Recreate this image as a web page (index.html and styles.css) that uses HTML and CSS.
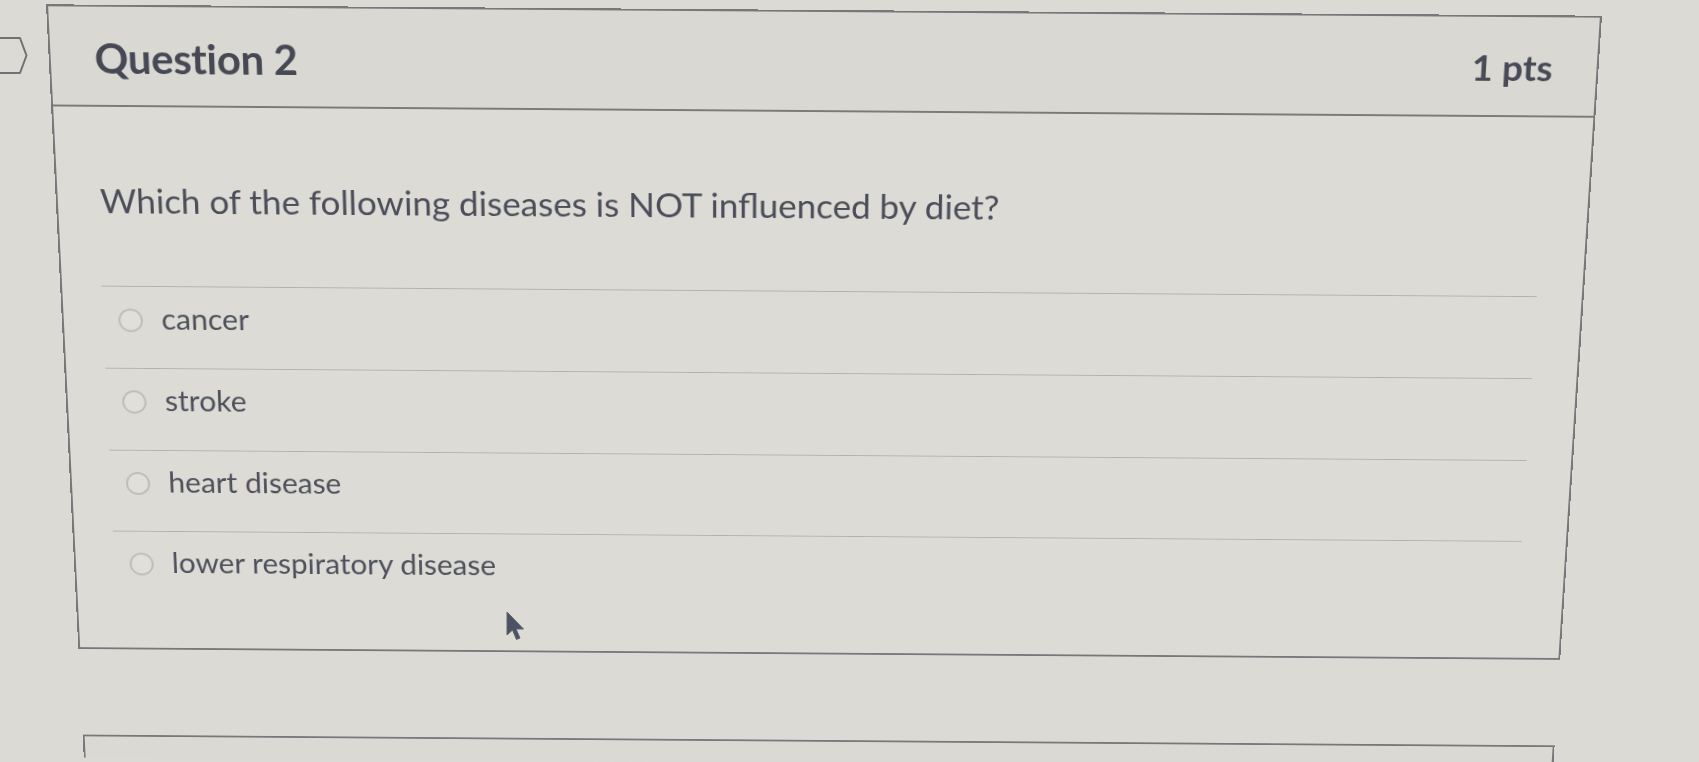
FILE: index.html
```html
<!DOCTYPE html>
<html lang="en">
<head>
<meta charset="utf-8">
<title>Question 2</title>
<link rel="stylesheet" href="styles.css">
</head>
<body>
<div class="page">
  <div class="gutter">
    <svg class="flag" width="30" height="40" viewBox="0 0 30 40">
      <path d="M-2 2 H20 L26.5 19.5 L20 37 H-2" fill="none" stroke="#707176" stroke-width="2" stroke-linejoin="round"/>
    </svg>
  </div>
  <div class="column">
    <div class="quiz">
      <div class="quiz-header">
        <h2 class="title">Question 2</h2>
        <div class="points">1 pts</div>
      </div>
      <div class="quiz-body">
        <p class="prompt">Which of the following diseases is NOT influenced by diet?</p>
        <ul class="answers">
          <li class="answer"><span class="radio"></span><span class="label">cancer</span></li>
          <li class="answer"><span class="radio"></span><span class="label">stroke</span></li>
          <li class="answer"><span class="radio"></span><span class="label">heart disease</span></li>
          <li class="answer"><span class="radio"></span><span class="label">lower respiratory disease</span></li>
        </ul>
      </div>
    </div>
    <div class="next-box"></div>
  </div>
  <svg class="cursor" width="24" height="32" viewBox="0 0 24 32">
    <path d="M2 1 L2 24 L7.5 19 L11.5 28.5 L15 27 L11 18 L18.5 18 Z" fill="#4c5262" stroke="#5d6272" stroke-width="1"/>
  </svg>
</div>
</body>
</html>
```
FILE: styles.css
```css
* { box-sizing: border-box; }
html, body { margin: 0; padding: 0; }
body {
  background: #dbdad5;
  font-family: Lato, "Open Sans", sans-serif;
  color: #4b4e59;
  width: 1699px;
  height: 762px;
  overflow: hidden;
}
.page {
  position: relative;
  display: flex;
  padding-top: 10px;
  height: 762px;
  overflow: hidden;
}
.gutter {
  width: 46px;
  flex: none;
}
.flag {
  display: block;
  margin-top: 26px;
}
.column {
  width: 1556px;
  flex: none;
  transform-origin: 778px 0;
  transform: rotate(0.42deg) perspective(2000px) rotateX(-8.41deg);
}
.quiz {
  border: 2px solid #78787a;
  background: #dcdbd6;
}
.quiz-header {
  height: 102px;
  border-bottom: 2px solid #7a7a7a;
  background: #d9d8d3;
  display: flex;
  justify-content: space-between;
  padding: 0 44px 0 44px;
}
.title {
  margin: 0;
  font-size: 42px;
  font-weight: 700;
  line-height: 1;
  padding-top: 31px;
  color: #464954;
  letter-spacing: -0.3px;
}
.points {
  font-size: 37px;
  font-weight: 700;
  line-height: 1;
  padding-top: 32px;
  color: #484b56;
}
.quiz-body {
  padding: 76px 46px 42px 40px;
}
.prompt {
  margin: 0 0 0 3px;
  font-size: 35.5px;
  line-height: 1.2;
  color: #4b4e59;
}
.answers {
  list-style: none;
  margin: 67px 0 0 0;
  padding: 0;
}
.answer {
  height: 87.7px;
  border-top: 1px solid #b3b2ad;
  display: flex;
  align-items: flex-start;
  padding-top: 15px;
}
.radio {
  width: 25px;
  height: 25px;
  border-radius: 50%;
  border: 2px solid #bebdb8;
  background: #e0dfda;
  margin: 8px 19px 0 16px;
  flex: none;
}
.label {
  font-size: 31px;
  line-height: 1.2;
  color: #4e515b;
}
.next-box {
  margin-top: 96px;
  width: 1556px;
  height: 26px;
  border: 2px solid #78787a;
  border-bottom: none;
  background: #dad9d4;
}
.cursor {
  position: absolute;
  left: 505px;
  top: 611px;
}
```
